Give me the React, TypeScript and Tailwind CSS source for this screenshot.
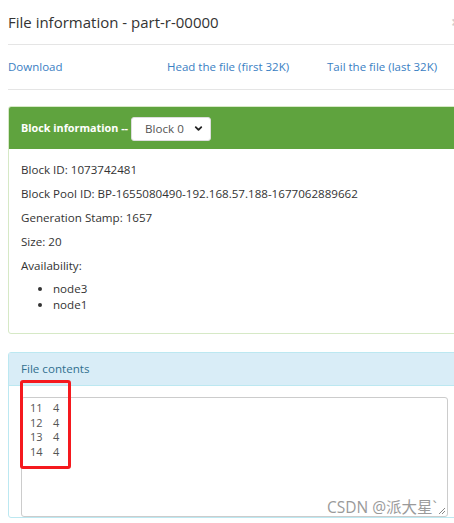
import { ChevronDown } from "lucide-react";

const rows = [
  ["11", "4"],
  ["12", "4"],
  ["13", "4"],
  ["14", "4"],
];

export default function App() {
  return (
    <div
      className="relative h-[523px] w-[454px] overflow-hidden bg-white text-[11.6px] text-[#333]"
      style={{ fontFamily: '"Open Sans", "Noto Sans CJK SC", sans-serif' }}
    >
      <div className="w-[500px] pl-[8px]">
        {/* header */}
        <div className="flex h-[44px] items-center">
          <h1 className="text-[15px] font-normal text-[#333]">File information - part-r-00000</h1>
        </div>
        <div className="w-[480px] border-t border-[#e5e5e5]" />

        {/* links */}
        <div className="grid h-[44px] w-[480px] grid-cols-[159px_160px_160px] items-center text-[11.5px] text-[#3a80c3]">
          <a>Download</a>
          <a>Head the file (first 32K)</a>
          <a>Tail the file (last 32K)</a>
        </div>
        <div className="w-[480px] border-t border-[#e5e5e5]" />

        {/* block information */}
        <div className="mt-[16px] w-[453px] rounded-[3px] border border-[#d6e9c6]">
          <div className="flex h-[42px] items-center gap-[3px] rounded-t-[2px] bg-[#5fa33e] pl-[12px] pt-[1px]">
            <span className="text-[10.8px] font-bold text-white">Block information --</span>
            <div className="flex h-[24px] w-[80px] items-center justify-between rounded-[3px] border border-[#ddd] bg-white pl-[13px] pr-[6px] text-[#555]">
              <span>Block 0</span>
              <ChevronDown size={11} strokeWidth={4} className="text-[#222]" />
            </div>
          </div>
          <div className="px-[12px] pb-[20px] pt-[9px]">
            <p className="leading-[24px]">Block ID: 1073742481</p>
            <p className="leading-[24px]">Block Pool ID: BP-1655080490-192.168.57.188-1677062889662</p>
            <p className="leading-[24px]">Generation Stamp: 1657</p>
            <p className="leading-[24px]">Size: 20</p>
            <p className="leading-[24px]">Availability:</p>
            <ul className="mt-[3px] list-disc pl-[32px] leading-[16px]">
              <li>node3</li>
              <li>node1</li>
            </ul>
          </div>
        </div>

        {/* file contents */}
        <div className="mt-[18px] w-[453px] rounded-[3px] border border-[#bce8f1]">
          <div className="flex h-[33px] items-center border-b border-[#bce8f1] bg-[#d9edf7] pl-[12px] text-[#31708f]">
            File contents
          </div>
          <div className="px-[12px] pt-[11px]">
            <div className="relative h-[120px] rounded-[3px] border border-[#ccc] px-[8px] pt-[3px] text-[11px] leading-[14.5px] text-[#555]">
              {rows.map(([a, b]) => (
                <div key={a} className="flex">
                  <span className="w-[23px]">{a}</span>
                  <span>{b}</span>
                </div>
              ))}
              <svg className="absolute bottom-[1px] right-[1px]" width="8" height="8" viewBox="0 0 8 8">
                <path d="M7 1 L1 7 M7 4 L4 7" stroke="#888" strokeWidth="1" />
              </svg>
            </div>
          </div>
        </div>
      </div>

      {/* close */}
      <span className="absolute left-[451px] top-[10px] text-[16px] font-bold text-[#d0d0d0]">×</span>

      {/* annotation box */}
      <div className="absolute left-[20px] top-[380px] h-[89px] w-[51px] rounded-[3px] border-[3px] border-[#f5191e]" />

      {/* watermark */}
      <span className="absolute left-[327px] top-[496px] text-[15.5px] text-[#9a9a9a] [text-shadow:0_0_2px_#fff]">
        CSDN @派大星`
      </span>
    </div>
  );
}
